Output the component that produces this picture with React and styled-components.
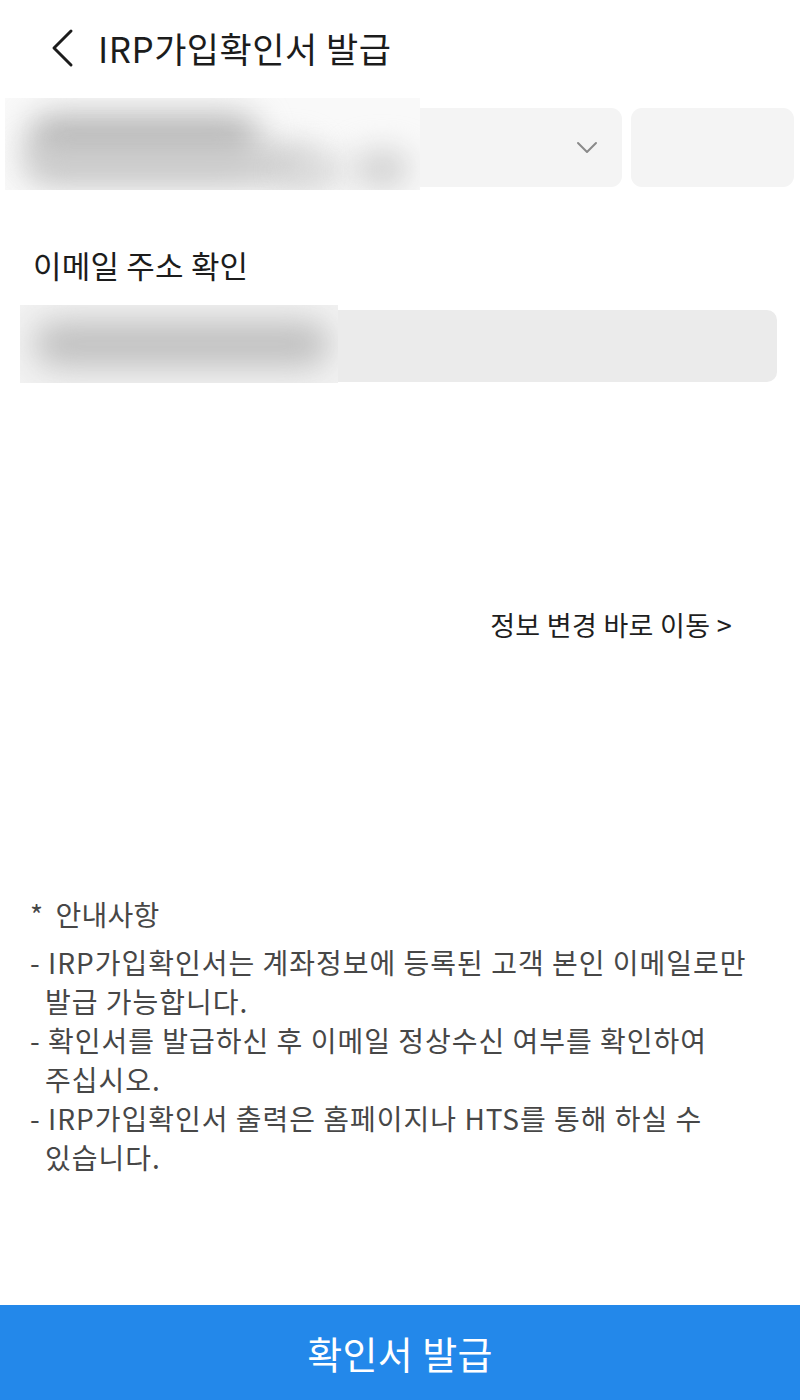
import React from 'react';
import styled, { createGlobalStyle } from 'styled-components';

const GlobalStyle = createGlobalStyle`
  html, body {
    margin: 0;
    padding: 0;
    background: #ffffff;
  }
  body {
    font-family: "Noto Sans CJK KR", "Noto Sans", sans-serif;
    -webkit-font-smoothing: antialiased;
  }
`;

const Page = styled.div`
  width: 800px;
  min-height: 1400px;
  display: flex;
  flex-direction: column;
  background: #fff;
`;

const Header = styled.header`
  height: 95px;
  display: flex;
  align-items: center;
  padding-left: 48px;
  gap: 20px;
`;

const BackButton = styled.button`
  width: 30px;
  height: 40px;
  padding: 0;
  border: 0;
  background: none;
  display: flex;
  align-items: center;
  justify-content: center;
`;

const Title = styled.h1`
  margin: 0;
  font-size: 35px;
  font-weight: 400;
  color: #1c1c1c;
  letter-spacing: 0.5px;
  line-height: 40px;
`;

const SelectRow = styled.div`
  margin-top: 13px;
  padding: 0 6px 0 5px;
  display: flex;
  gap: 9px;
  height: 79px;
`;

const Select = styled.div`
  position: relative;
  flex: 1;
  background: #f4f4f4;
  border-radius: 11px;
  display: flex;
  align-items: center;
  justify-content: flex-end;
  padding-right: 24px;
`;

const SideBox = styled.div`
  width: 163px;
  background: #f4f4f4;
  border-radius: 11px;
`;

const Redacted = styled.div`
  position: absolute;
  left: ${p => p.$left}px;
  top: ${p => p.$top}px;
  width: ${p => p.$width}px;
  height: ${p => p.$height}px;
  background: ${p => p.$bg};
  overflow: hidden;
`;

const Smudge = styled.div`
  position: absolute;
  left: ${p => p.$x}px;
  top: ${p => p.$y}px;
  width: ${p => p.$w}px;
  height: ${p => p.$h}px;
  background: ${p => p.$c};
  border-radius: 24px;
  filter: blur(16px);
`;

const Label = styled.div`
  margin: 58px 0 0 33px;
  font-size: 31px;
  line-height: 40px;
  color: #1c1c1c;
  letter-spacing: 0.2px;
`;

const EmailField = styled.div`
  position: relative;
  margin: 25px 23px 0 20px;
  height: 72px;
  background: #ebebeb;
  border-radius: 10px;
`;

const LinkRow = styled.div`
  margin-top: 225px;
  padding-right: 68px;
  display: flex;
  justify-content: flex-end;
`;

const ChangeLink = styled.a`
  font-size: 27px;
  line-height: 36px;
  color: #1e1e1e;
  text-decoration: none;
  letter-spacing: 0.3px;
`;

const Notes = styled.section`
  margin: 251px 20px 0 30px;
  color: #474747;
`;

const NotesTitle = styled.div`
  font-size: 28px;
  line-height: 40px;
  letter-spacing: 0.3px;
  margin-bottom: 9px;

  span {
    margin-right: 12px;
  }
`;

const NoteItem = styled.p`
  margin: 0;
  font-size: 28px;
  line-height: 39px;
  letter-spacing: 1px;
  padding-left: 15px;
  text-indent: -15px;
  white-space: nowrap;
`;

const Footer = styled.button`
  margin-top: auto;
  height: 95px;
  width: 100%;
  border: 0;
  background: #2388ea;
  color: #fff;
  font-family: inherit;
  font-size: 38px;
  letter-spacing: 0.4px;
  display: flex;
  align-items: center;
  justify-content: center;
`;

const ChevronLeft = () => (
  <svg width="28" height="40" viewBox="0 0 28 40" fill="none">
    <polyline points="22,3 5,20 22,37" stroke="#1c1c1c" strokeWidth="3" strokeLinecap="round" strokeLinejoin="round" />
  </svg>
);

const ChevronDown = () => (
  <svg width="22" height="14" viewBox="0 0 22 14" fill="none">
    <polyline points="2,2 11,11 20,2" stroke="#8a8a8a" strokeWidth="2" strokeLinecap="round" strokeLinejoin="round" />
  </svg>
);

const notes = [
  ['- IRP가입확인서는 계좌정보에 등록된 고객 본인 이메일로만', '발급 가능합니다.'],
  ['- 확인서를 발급하신 후 이메일 정상수신 여부를 확인하여', '주십시오.'],
  ['- IRP가입확인서 출력은 홈페이지나 HTS를 통해 하실 수', '있습니다.'],
];

export default function App() {
  return (
    <Page>
      <GlobalStyle />
      <Header>
        <BackButton aria-label="뒤로"><ChevronLeft /></BackButton>
        <Title>IRP가입확인서 발급</Title>
      </Header>

      <SelectRow>
        <Select>
          <Redacted $left={0} $top={-10} $width={415} $height={92} $bg="#f9f9f9">
            <Smudge $x={24} $y={16} $w={230} $h={52} $c="#b8b8b8" />
            <Smudge $x={20} $y={48} $w={290} $h={38} $c="#cacaca" />
            <Smudge $x={280} $y={58} $w={60} $h={30} $c="#d6d6d6" />
            <Smudge $x={350} $y={54} $w={54} $h={34} $c="#cbcbcb" />
          </Redacted>
          <ChevronDown />
        </Select>
        <SideBox />
      </SelectRow>

      <Label>이메일 주소 확인</Label>
      <EmailField>
        <Redacted $left={0} $top={-5} $width={318} $height={78} $bg="#f2f2f2">
          <Smudge $x={14} $y={16} $w={296} $h={46} $c="#c0c0c0" />
        </Redacted>
      </EmailField>

      <LinkRow>
        <ChangeLink href="#">정보 변경 바로 이동 &gt;</ChangeLink>
      </LinkRow>

      <Notes>
        <NotesTitle><span>*</span>안내사항</NotesTitle>
        {notes.map(([first, second]) => (
          <NoteItem key={first}>
            {first}
            <br />
            {second}
          </NoteItem>
        ))}
      </Notes>

      <Footer>확인서 발급</Footer>
    </Page>
  );
}
